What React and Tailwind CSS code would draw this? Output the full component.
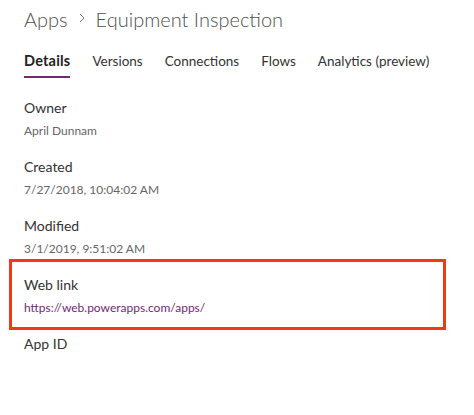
export default function App() {
  const tabs = ['Details', 'Versions', 'Connections', 'Flows', 'Analytics (preview)']
  const rows = [
    { label: 'Owner', value: 'April Dunnam' },
    { label: 'Created', value: '7/27/2018, 10:04:02 AM' },
    { label: 'Modified', value: '3/1/2019, 9:51:02 AM' },
  ]
  return (
    <div className="w-[474px] h-[415px] bg-white overflow-hidden px-[24px] font-['Lato',sans-serif] text-[#333]">
      <div className="flex items-center h-[36px] pt-[2px] text-[20px] font-light text-[#505050] whitespace-nowrap">
        <span>Apps</span>
        <svg className="mx-[10px] mt-[-2px]" width="8" height="10" viewBox="0 0 8 10" fill="none">
          <path d="M2 1l4 4-4 4" stroke="#777" strokeWidth="1" />
        </svg>
        <span>Equipment Inspection</span>
      </div>
      <div className="flex gap-[22px] mt-[15px] text-[13.5px] leading-[20px] whitespace-nowrap">
        {tabs.map((t, i) => (
          <div key={t} className={i === 0 ? 'font-bold text-[14.5px] tracking-[0.2px] text-[#222] pb-[5px] border-b-2 border-[#742774]' : 'pb-[7px]'}>
            {t}
          </div>
        ))}
      </div>
      <div className="mt-[20px]">
        {rows.map(r => (
          <div key={r.label} className="pb-[16px]">
            <div className="text-[14px] leading-[20px]">{r.label}</div>
            <div className="mt-[3px] text-[12px] leading-[20px] text-[#666]">{r.value}</div>
          </div>
        ))}
        <div className="-ml-[15px] w-[437px] border-[3px] border-[#f03a17] pl-[12px] pt-[13px] pb-[9px] mt-[-16px]">
          <div className="text-[14px] leading-[20px]">Web link</div>
          <div className="mt-[3px] text-[12px] leading-[20px] text-[#742774]">https://web.powerapps.com/apps/</div>
        </div>
        <div className="mt-[4px] text-[14px] leading-[20px]">App ID</div>
      </div>
    </div>
  )
}
